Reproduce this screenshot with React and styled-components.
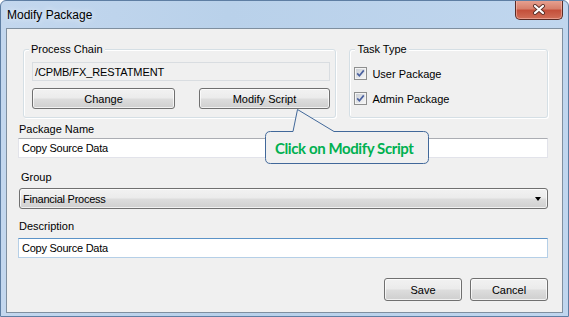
import React from 'react';
import styled, { createGlobalStyle } from 'styled-components';

const GlobalStyle = createGlobalStyle`
  body {
    margin: 0;
    font-family: "Liberation Sans", Arial, sans-serif;
    font-size: 11px;
    color: #000;
    background: #fff;
    overflow: hidden;
  }
`;

const Window = styled.div`
  position: relative;
  width: 569px;
  height: 317px;
  box-sizing: border-box;
  display: flex;
  flex-direction: column;
  border: 1px solid #5e7ea3;
  border-radius: 6px 6px 0 0;
  background: linear-gradient(90deg, #c3d7ee 0%, #b9d1ea 40%, #c0d6ee 100%);
  overflow: hidden;
`;

const TitleBar = styled.div`
  height: 27px;
  display: flex;
  justify-content: space-between;
  align-items: flex-start;
`;

const Title = styled.div`
  margin: 7px 0 0 6px;
  font-size: 12px;
  line-height: 14px;
  color: #000;
  text-shadow: 0 0 6px rgba(255, 255, 255, 0.9);
`;

const CloseButton = styled.div`
  margin: -1px 5px 0 0;
  width: 48px;
  height: 20px;
  box-sizing: border-box;
  display: flex;
  align-items: center;
  justify-content: center;
  border: 1px solid #5a2b24;
  border-top: none;
  border-radius: 0 0 5px 5px;
  background: linear-gradient(180deg, #e8a494 0%, #d7806c 45%, #c4503b 55%, #d06f58 100%);
  box-shadow: inset 0 0 0 1px rgba(255, 200, 190, 0.5);
`;

const Client = styled.div`
  flex: 1;
  margin: 0 5px 3px 5px;
  border: 1px solid #7f8f9f;
  background: #f0f0f0;
  padding: 14px 14px 0 11px;
  display: flex;
  flex-direction: column;
`;

const TopRow = styled.div`
  display: flex;
  gap: 13px;
  margin-left: 5px;
`;

const GroupBox = styled.fieldset`
  margin: 0;
  padding: 0;
  width: ${(p) => p.$width}px;
  box-sizing: border-box;
  min-width: 0;
  border: 1px solid #d5dfe5;
  border-radius: 3px;
  box-shadow: inset 1px 1px 0 #fff, 1px 1px 0 #fff;
`;

const Legend = styled.legend`
  margin-left: 5px;
  padding: 0 2px;
  line-height: 12px;
  font-size: 11px;
  background: #f0f0f0;
`;

const GroupBody = styled.div`
  padding: ${(p) => p.$padding};
  display: flex;
  flex-direction: column;
`;

const ReadOnlyField = styled.div`
  height: 19px;
  box-sizing: border-box;
  border: 1px solid #d9dde1;
  background: #f0f0f0;
  padding: 0 2px;
  display: flex;
  align-items: center;
  letter-spacing: -0.1px;
`;

const ButtonRow = styled.div`
  display: flex;
  gap: ${(p) => p.$gap}px;
  margin-top: ${(p) => p.$top}px;
  justify-content: ${(p) => p.$justify || 'flex-start'};
`;

const Button = styled.button`
  width: ${(p) => p.$width}px;
  height: ${(p) => p.$height}px;
  box-sizing: border-box;
  padding: 0;
  border: 1px solid #707070;
  border-radius: 3px;
  background: linear-gradient(180deg, #f2f2f2 0%, #ebebeb 48%, #dddddd 52%, #cfcfcf 100%);
  box-shadow: inset 0 0 0 1px rgba(255, 255, 255, 0.7);
  font-family: "Liberation Sans", Arial, sans-serif;
  font-size: 11px;
  color: #000;
`;

const CheckRow = styled.label`
  height: 25px;
  display: flex;
  align-items: center;
  gap: 5px;
`;

const FieldLabel = styled.div`
  margin-top: ${(p) => p.$top}px;
  padding-left: ${(p) => p.$indent || 1}px;
  line-height: 13px;
  height: 13px;
`;

const TextBox = styled.div`
  margin-top: ${(p) => p.$top}px;
  height: 20px;
  box-sizing: border-box;
  background: #fff;
  border: 1px solid ${(p) => (p.$focused ? '#b5cfe7' : '#e2e3ea')};
  border-top-color: ${(p) => (p.$focused ? '#5c93c7' : '#abadb3')};
  padding: 0 3px;
  display: flex;
  align-items: center;
  letter-spacing: -0.25px;
`;

const SelectBox = styled.div`
  margin-top: ${(p) => p.$top}px;
  margin-left: 1px;
  height: 21px;
  box-sizing: border-box;
  border: 1px solid #707070;
  border-radius: 3px;
  background: linear-gradient(180deg, #f2f2f2 0%, #ebebeb 48%, #dddddd 52%, #cfcfcf 100%);
  box-shadow: inset 0 0 0 1px rgba(255, 255, 255, 0.7);
  padding: 0 6px 0 3px;
  display: flex;
  align-items: center;
  justify-content: space-between;
  letter-spacing: -0.25px;
`;

const Arrow = styled.span`
  width: 0;
  height: 0;
  border-left: 3.5px solid transparent;
  border-right: 3.5px solid transparent;
  border-top: 4px solid #000;
`;

const Callout = styled.div`
  position: absolute;
  left: 262px;
  top: 107px;
  width: 167px;
  height: 58px;
  padding-top: 24px;
  box-sizing: border-box;
`;

const CalloutShape = styled.svg`
  position: absolute;
  left: 0;
  top: 0;
`;

const CalloutText = styled.div`
  position: relative;
  height: 32px;
  padding-left: 12px;
  display: flex;
  align-items: center;
  font-family: Lato, "Open Sans", sans-serif;
  font-weight: 700;
  font-size: 15px;
  letter-spacing: -0.4px;
  color: #00b050;
`;

function CheckBox() {
  return (
    <svg width="13" height="13" viewBox="0 0 13 13">
      <defs>
        <linearGradient id="cb" x1="0" y1="0" x2="1" y2="1">
          <stop offset="0" stopColor="#cbcfd5" />
          <stop offset="1" stopColor="#f6f6f6" />
        </linearGradient>
      </defs>
      <rect x="0.5" y="0.5" width="12" height="12" fill="#f4f4f4" stroke="#8e8f8f" />
      <rect x="2" y="2" width="9" height="9" fill="url(#cb)" />
      <path d="M3.2 6.4 L5.4 8.8 L9.8 3.4" fill="none" stroke="#4c62a0" strokeWidth="1.7" />
    </svg>
  );
}

export default function App() {
  return (
    <>
      <GlobalStyle />
      <Window>
        <TitleBar>
          <Title>Modify Package</Title>
          <CloseButton>
            <svg width="14" height="11" viewBox="0 0 14 11">
              <path d="M3 2 L11 9 M11 2 L3 9" stroke="#5b3029" strokeWidth="4" strokeLinecap="round" />
              <path d="M3 2 L11 9 M11 2 L3 9" stroke="#fff" strokeWidth="2.2" strokeLinecap="round" />
            </svg>
          </CloseButton>
        </TitleBar>
        <Client>
          <TopRow>
            <GroupBox $width={314}>
              <Legend>Process Chain</Legend>
              <GroupBody $padding="7px 5px 8px 8px">
                <ReadOnlyField>/CPMB/FX_RESTATMENT</ReadOnlyField>
                <ButtonRow $gap={24} $top={7}>
                  <Button $width={143} $height={21}>Change</Button>
                  <Button $width={131} $height={21}>Modify Script</Button>
                </ButtonRow>
              </GroupBody>
            </GroupBox>
            <GroupBox $width={199}>
              <Legend>Task Type</Legend>
              <GroupBody $padding="6px 0 0 4px">
                <CheckRow>
                  <CheckBox />
                  User Package
                </CheckRow>
                <CheckRow>
                  <CheckBox />
                  Admin Package
                </CheckRow>
              </GroupBody>
            </GroupBox>
          </TopRow>

          <FieldLabel $top={5}>Package Name</FieldLabel>
          <TextBox $top={2}>Copy Source Data</TextBox>

          <FieldLabel $top={13} $indent={3}>Group</FieldLabel>
          <SelectBox $top={4}>
            Financial Process
            <Arrow />
          </SelectBox>

          <FieldLabel $top={11}>Description</FieldLabel>
          <TextBox $top={5} $focused>Copy Source Data</TextBox>

          <ButtonRow $gap={8} $top={20} $justify="flex-end">
            <Button $width={78} $height={23}>Save</Button>
            <Button $width={78} $height={23}>Cancel</Button>
          </ButtonRow>
        </Client>

        <Callout>
          <CalloutShape width="167" height="58" viewBox="0 0 167 58">
            <path
              d="M7.5 23.5 L30 23.5 L34.5 1.5 L71 23.5 L160.5 23.5 Q165.5 23.5 165.5 28.5 L165.5 50.5 Q165.5 55.5 160.5 55.5 L7.5 55.5 Q2.5 55.5 2.5 50.5 L2.5 28.5 Q2.5 23.5 7.5 23.5 Z"
              fill="#f0f0f0"
              stroke="#41689a"
              strokeWidth="1"
            />
          </CalloutShape>
          <CalloutText>Click on Modify Script</CalloutText>
        </Callout>
      </Window>
    </>
  );
}
